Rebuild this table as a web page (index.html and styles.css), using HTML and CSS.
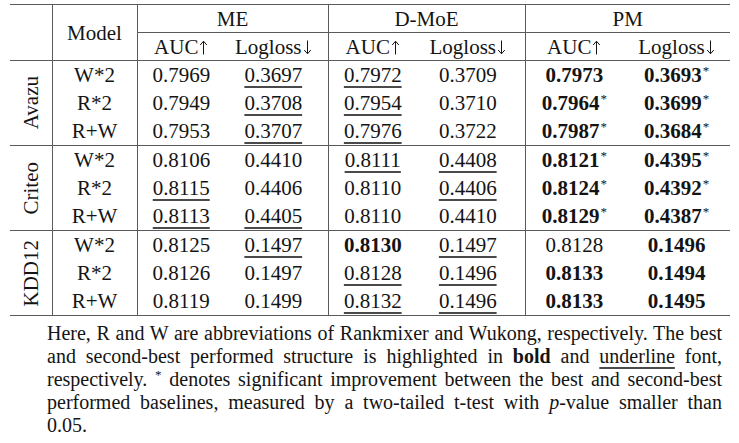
FILE: index.html
```html
<!DOCTYPE html>
<html>
<head>
<meta charset="utf-8">
<link rel="stylesheet" href="styles.css">
</head>
<body class="doc">
<div class="page">
<table class="res">
  <colgroup class="grp"><col class="c-ds"></colgroup>
  <colgroup class="grp"><col class="c-model"></colgroup>
  <colgroup class="grp"><col class="c-me-a"><col class="c-me-l"></colgroup>
  <colgroup class="grp"><col class="c-dm-a"><col class="c-dm-l"></colgroup>
  <colgroup><col class="c-pm-a"><col class="c-pm-l"></colgroup>
  <thead class="hd">
    <tr class="h1">
      <th rowspan="2" class="cell"></th>
      <th rowspan="2" class="cell">Model</th>
      <th colspan="2" class="cell grp-h">ME</th>
      <th colspan="2" class="cell grp-h">D-MoE</th>
      <th colspan="2" class="cell grp-h">PM</th>
    </tr>
    <tr class="h2">
      <th class="cell">AUC<svg class="arr" viewBox="0 0 9 15" width="9" height="15"><path d="M4.5 14.5V1.5M1.2 5L4.5 1.2 7.8 5" fill="none" stroke="#141414" stroke-width="1"/></svg></th>
      <th class="cell pl">Logloss<svg class="arr" viewBox="0 0 9 15" width="9" height="15"><path d="M4.5 0.5V13.5M1.2 10L4.5 13.8 7.8 10" fill="none" stroke="#141414" stroke-width="1"/></svg></th>
      <th class="cell">AUC<svg class="arr" viewBox="0 0 9 15" width="9" height="15"><path d="M4.5 14.5V1.5M1.2 5L4.5 1.2 7.8 5" fill="none" stroke="#141414" stroke-width="1"/></svg></th>
      <th class="cell pl">Logloss<svg class="arr" viewBox="0 0 9 15" width="9" height="15"><path d="M4.5 0.5V13.5M1.2 10L4.5 13.8 7.8 10" fill="none" stroke="#141414" stroke-width="1"/></svg></th>
      <th class="cell">AUC<svg class="arr" viewBox="0 0 9 15" width="9" height="15"><path d="M4.5 14.5V1.5M1.2 5L4.5 1.2 7.8 5" fill="none" stroke="#141414" stroke-width="1"/></svg></th>
      <th class="cell">Logloss<svg class="arr" viewBox="0 0 9 15" width="9" height="15"><path d="M4.5 0.5V13.5M1.2 10L4.5 13.8 7.8 10" fill="none" stroke="#141414" stroke-width="1"/></svg></th>
    </tr>
  </thead>
  <tbody class="bd">
    <tr>
      <td rowspan="3" class="cell ds"><div class="rot">Avazu</div></td>
      <td class="cell">W*2</td>
      <td class="cell">0.7969</td><td class="cell pl"><u class="ul">0.3697</u></td>
      <td class="cell"><u class="ul">0.7972</u></td><td class="cell pl">0.3709</td>
      <td class="cell"><b class="bf">0.7973</b></td><td class="cell"><b class="bf">0.3693</b><span class="st">*</span></td>
    </tr>
    <tr>
      <td class="cell">R*2</td>
      <td class="cell">0.7949</td><td class="cell pl"><u class="ul">0.3708</u></td>
      <td class="cell"><u class="ul">0.7954</u></td><td class="cell pl">0.3710</td>
      <td class="cell"><b class="bf">0.7964</b><span class="st">*</span></td><td class="cell"><b class="bf">0.3699</b><span class="st">*</span></td>
    </tr>
    <tr>
      <td class="cell">R+W</td>
      <td class="cell">0.7953</td><td class="cell pl"><u class="ul">0.3707</u></td>
      <td class="cell"><u class="ul">0.7976</u></td><td class="cell pl">0.3722</td>
      <td class="cell"><b class="bf">0.7987</b><span class="st">*</span></td><td class="cell"><b class="bf">0.3684</b><span class="st">*</span></td>
    </tr>
  </tbody>
  <tbody class="bd">
    <tr>
      <td rowspan="3" class="cell ds"><div class="rot">Criteo</div></td>
      <td class="cell">W*2</td>
      <td class="cell">0.8106</td><td class="cell pl">0.4410</td>
      <td class="cell"><u class="ul">0.8111</u></td><td class="cell pl"><u class="ul">0.4408</u></td>
      <td class="cell"><b class="bf">0.8121</b><span class="st">*</span></td><td class="cell"><b class="bf">0.4395</b><span class="st">*</span></td>
    </tr>
    <tr>
      <td class="cell">R*2</td>
      <td class="cell"><u class="ul">0.8115</u></td><td class="cell pl">0.4406</td>
      <td class="cell">0.8110</td><td class="cell pl"><u class="ul">0.4406</u></td>
      <td class="cell"><b class="bf">0.8124</b><span class="st">*</span></td><td class="cell"><b class="bf">0.4392</b><span class="st">*</span></td>
    </tr>
    <tr>
      <td class="cell">R+W</td>
      <td class="cell"><u class="ul">0.8113</u></td><td class="cell pl"><u class="ul">0.4405</u></td>
      <td class="cell">0.8110</td><td class="cell pl">0.4410</td>
      <td class="cell"><b class="bf">0.8129</b><span class="st">*</span></td><td class="cell"><b class="bf">0.4387</b><span class="st">*</span></td>
    </tr>
  </tbody>
  <tbody class="bd">
    <tr>
      <td rowspan="3" class="cell ds"><div class="rot">KDD12</div></td>
      <td class="cell">W*2</td>
      <td class="cell">0.8125</td><td class="cell pl"><u class="ul">0.1497</u></td>
      <td class="cell"><b class="bf">0.8130</b></td><td class="cell pl"><u class="ul">0.1497</u></td>
      <td class="cell">0.8128</td><td class="cell"><b class="bf">0.1496</b></td>
    </tr>
    <tr>
      <td class="cell">R*2</td>
      <td class="cell">0.8126</td><td class="cell pl">0.1497</td>
      <td class="cell"><u class="ul">0.8128</u></td><td class="cell pl"><u class="ul">0.1496</u></td>
      <td class="cell"><b class="bf">0.8133</b></td><td class="cell"><b class="bf">0.1494</b></td>
    </tr>
    <tr>
      <td class="cell">R+W</td>
      <td class="cell">0.8119</td><td class="cell pl">0.1499</td>
      <td class="cell"><u class="ul">0.8132</u></td><td class="cell pl"><u class="ul">0.1496</u></td>
      <td class="cell"><b class="bf">0.8133</b></td><td class="cell"><b class="bf">0.1495</b></td>
    </tr>
  </tbody>
</table>
<div class="caption">
  <span class="ln">Here, R and W are abbreviations of Rankmixer and Wukong, respectively. The best</span>
  <span class="ln">and second-best performed structure is highlighted in <b class="bf">bold</b> and <u class="ul">underline</u> font,</span>
  <span class="ln">respectively. <span class="cst">*</span> denotes significant improvement between the best and second-best</span>
  <span class="ln">performed baselines, measured by a two-tailed t-test with <i class="it">p</i>-value smaller than</span>
  <span class="last">0.05.</span>
</div>
</div>
</body>
</html>
```

FILE: styles.css
```css
.doc {
  margin: 0;
  padding: 0;
  background: #ffffff;
}
.page {
  font-family: "Liberation Serif", serif;
  color: #141414;
  font-size: 21px;
  padding-top: 4px;
}
.res {
  border-collapse: collapse;
  table-layout: fixed;
  width: 720px;
  margin: 0 0 0 10px;
  border-top: 1px solid #5a5a5a;
  border-bottom: 1px solid #5a5a5a;
}
.c-ds { width: 42px; }
.c-model { width: 85px; }
.c-me-a { width: 88px; }
.c-me-l { width: 103px; }
.c-dm-a { width: 89px; }
.c-dm-l { width: 108px; }
.c-pm-a { width: 98px; }
.c-pm-l { width: 107px; }
.grp {
  border-right: 1px solid #5a5a5a;
}
.hd {
  border-bottom: 1px solid #5a5a5a;
}
.bd {
  border-top: 1px solid #5a5a5a;
}
.res .cell {
  font-family: "Liberation Serif", serif;
  font-size: 21px;
  font-weight: normal;
  text-align: center;
  padding: 0;
  line-height: 24px;
  white-space: nowrap;
  height: 28px;
}
.res .h1 .cell, .res .h2 .cell { height: 27px; }
.res .grp-h {
  border-bottom: 1px solid #5a5a5a;
}
.res .pl { padding-right: 6px; }
.arr {
  vertical-align: -1px;
  margin-left: 1px;
}
.bf { font-weight: bold; }
.it { font-style: italic; }
.ul {
  text-decoration: underline;
  text-decoration-thickness: 1.5px;
  text-underline-offset: 4px;
  text-decoration-color: #4a4a4a;
}
.st {
  font-size: 13px;
  font-weight: normal;
  vertical-align: 7px;
  line-height: 0;
  margin-left: 1px;
}
.rot {
  writing-mode: vertical-rl;
  transform: rotate(180deg);
  margin: 0 auto;
  line-height: 24px;
}
.caption {
  font-family: "Liberation Serif", serif;
  margin: 6px 17px 0 47px;
  line-height: 23px;
  font-size: 20px;
}
.ln {
  display: block;
  text-align: justify;
  text-align-last: justify;
}
.last { display: block; }
.cst {
  font-size: 13px;
  vertical-align: 7px;
  line-height: 0;
}
```
